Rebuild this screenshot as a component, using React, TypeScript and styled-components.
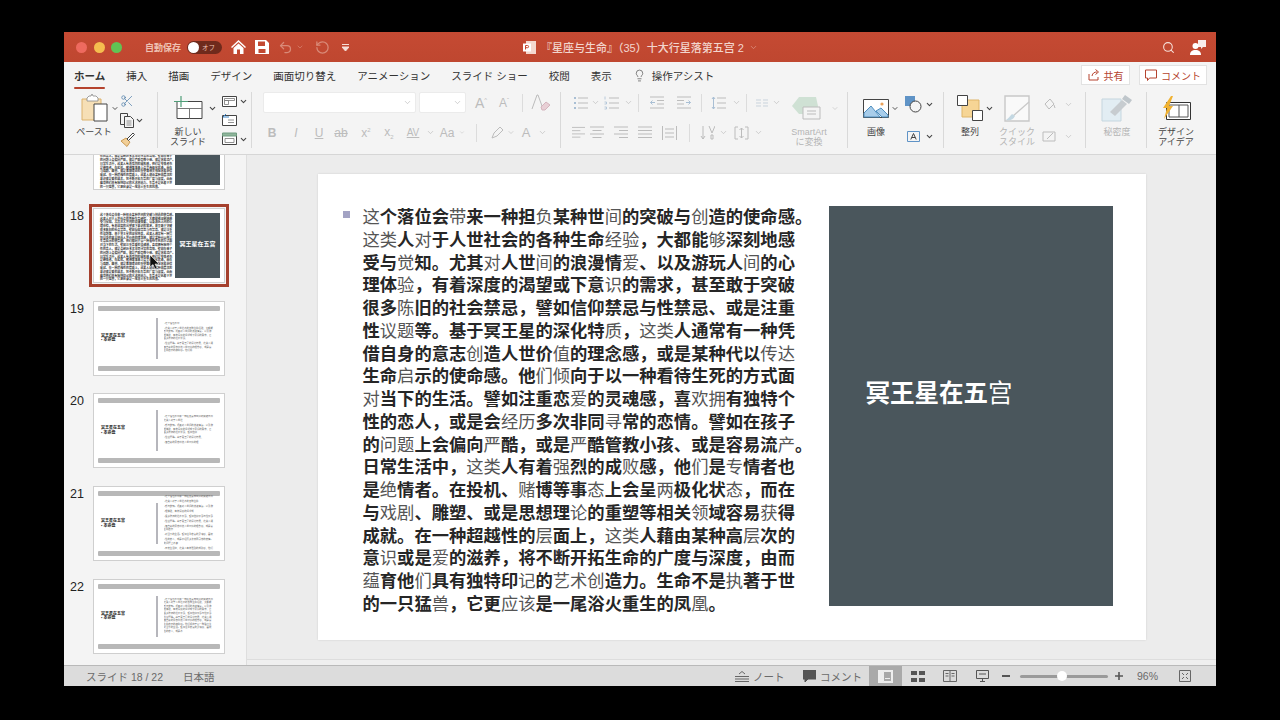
import React from "react";
import styled, { createGlobalStyle } from "styled-components";
import { Scissors, Lightbulb, Search, Undo2, RotateCcw, ChevronDown } from "lucide-react";

const PALE = "#bcbcbc";
const INK = "#4a4a4a";
const UI_FONT = `"Liberation Sans", "Noto Sans CJK JP", sans-serif`;
const CN_FONT = `"Liberation Sans", "Noto Sans CJK SC", sans-serif`;

const SLIDE_LINES = [
  "这个落位会带来一种担负某种世间的突破与创造的使命感。",
  "这类人对于人世社会的各种生命经验，大都能够深刻地感",
  "受与觉知。尤其对人世间的浪漫情爱、以及游玩人间的心",
  "理体验，有着深度的渴望或下意识的需求，甚至敢于突破",
  "很多陈旧的社会禁忌，譬如信仰禁忌与性禁忌、或是注重",
  "性议题等。基于冥王星的深化特质，这类人通常有一种凭",
  "借自身的意志创造人世价值的理念感，或是某种代以传达",
  "生命启示的使命感。他们倾向于以一种看待生死的方式面",
  "对当下的生活。譬如注重恋爱的灵魂感，喜欢拥有独特个",
  "性的恋人，或是会经历多次非同寻常的恋情。譬如在孩子",
  "的问题上会偏向严酷，或是严酷管教小孩、或是容易流产。",
  "日常生活中，这类人有着强烈的成败感，他们是专情者也",
  "是绝情者。在投机、赌博等事态上会呈两极化状态，而在",
  "与戏剧、雕塑、或是思想理论的重塑等相关领域容易获得",
  "成就。在一种超越性的层面上，这类人藉由某种高层次的",
  "意识或是爱的滋养，将不断开拓生命的广度与深度，由而",
  "蕴育他们具有独特印记的艺术创造力。生命不是执著于世",
  "的一只猛兽，它更应该是一尾浴火重生的凤凰。",
];

// these characters fell back to a thinner face in the original deck
const THIN_CHARS = "这带负间创类对经验够觉爱识陈议题质值传达启们倾欢拥历寻问严产强败专绝赌态两戏剧论领获层艺术记执兽应该风凰蕴宫";

const GlobalStyle = createGlobalStyle`
  html, body { margin: 0; background: #000; }
  body { font-family: ${UI_FONT}; }
`;

const Screen = styled.div`
  width: 1280px;
  height: 720px;
  padding-top: 32px;
  box-sizing: border-box;
  display: flex;
  justify-content: center;
  overflow: hidden;
  background: #000;
`;

const Window = styled.div`
  width: 1152px;
  height: 654px;
  display: flex;
  flex-direction: column;
  background: #ececec;
  overflow: hidden;
`;

const TitleBar = styled.div`
  height: 30px;
  flex: none;
  display: flex;
  align-items: center;
  background: linear-gradient(#c54a33, #bf4730);
  color: #f2d6ce;
  position: relative;
`;

const Light = styled.span<{ $c: string }>`
  width: 11px;
  height: 11px;
  border-radius: 50%;
  background: ${({ $c }) => $c};
  margin-right: 6.5px;
`;

const Lights = styled.div`
  display: flex;
  margin-left: 12px;
  width: 69px;
`;

const AutoSave = styled.span`
  font-size: 9px;
  font-weight: 700;
  width: 42px;
  color: #eec2b4;
`;

const Toggle = styled.div`
  width: 35px;
  height: 13px;
  border-radius: 7px;
  background: #6f2a1c;
  display: flex;
  align-items: center;
  color: #eec2b4;
  font-size: 6.5px;
  margin-right: 8px;
  &::before {
    content: "";
    width: 11px;
    height: 11px;
    border-radius: 50%;
    background: #fff;
    margin: 0 3px 0 1px;
  }
`;

const Slot = styled.div<{ $w: number }>`
  width: ${({ $w }) => $w}px;
  flex: none;
  display: flex;
  align-items: center;
  justify-content: center;
`;

const DocTitle = styled.div`
  position: absolute;
  left: 459px;
  top: 0;
  height: 30px;
  display: flex;
  align-items: center;
  gap: 5px;
  font-size: 11px;
  font-family: ${CN_FONT};
  font-weight: 500;
  white-space: nowrap;
`;

const TitleRight = styled.div`
  margin-left: auto;
  display: flex;
  align-items: center;
  gap: 15px;
  padding-right: 10px;
`;

const TabBar = styled.div`
  height: 26px;
  flex: none;
  display: flex;
  align-items: center;
  padding: 0 9px 0 10px;
  background: #f4f4f4;
`;

const Tab = styled.div<{ $active?: boolean }>`
  position: relative;
  font-size: 10.5px;
  color: #333;
  margin-right: 21px;
  white-space: nowrap;
  font-weight: ${({ $active }) => ($active ? 700 : 400)};
  &::after {
    content: "";
    display: ${({ $active }) => ($active ? "block" : "none")};
    position: absolute;
    left: 0;
    right: 0;
    bottom: -6px;
    height: 2px;
    border-radius: 1px;
    background: #b5432e;
  }
`;

const Assist = styled.div`
  display: flex;
  align-items: center;
  gap: 6px;
  font-size: 10.5px;
  color: #333;
`;

const TabActions = styled.div`
  margin-left: auto;
  display: flex;
  gap: 9px;
`;

const ActionButton = styled.div<{ $w: number }>`
  width: ${({ $w }) => $w}px;
  height: 20px;
  box-sizing: border-box;
  background: #fff;
  border: 1px solid #e2e2e2;
  color: #b5432e;
  font-size: 10px;
  display: flex;
  align-items: center;
  justify-content: center;
  gap: 4px;
`;

const Ribbon = styled.div`
  height: 67px;
  flex: none;
  display: flex;
  box-sizing: border-box;
  padding-top: 4px;
  background: #f4f4f4;
  border-bottom: 1px solid #d6d6d6;
`;

const Group = styled.div<{ $w: number; $pl?: number; $last?: boolean }>`
  width: ${({ $w }) => $w}px;
  height: 56px;
  margin-bottom: 6px;
  box-sizing: border-box;
  flex: none;
  display: flex;
  padding-left: ${({ $pl }) => $pl ?? 0}px;
  border-right: 1px solid ${({ $last }) => ($last ? "transparent" : "#d9d9d9")};
`;

const Stack = styled.div<{ $w: number }>`
  width: ${({ $w }) => $w}px;
  flex: none;
  display: flex;
  flex-direction: column;
  align-items: center;
`;

const BigIcon = styled.div`
  height: 32px;
  display: flex;
  align-items: center;
  justify-content: center;
`;

const ToolLabel = styled.div<{ $pale?: boolean }>`
  font-size: 9px;
  line-height: 10px;
  margin-top: 3px;
  text-align: center;
  white-space: pre;
  color: ${({ $pale }) => ($pale ? "#b4b4b4" : "#444")};
`;

const SmallColumn = styled.div`
  display: flex;
  flex-direction: column;
  justify-content: space-between;
  height: 56px;
`;

const SmallRow = styled.div`
  display: flex;
  align-items: center;
  height: 18px;
`;

const FontRows = styled.div`
  display: flex;
  flex-direction: column;
  gap: 9px;
`;

const ToolRow = styled.div`
  display: flex;
  align-items: center;
  height: 21px;
`;

const Field = styled.div<{ $w: number }>`
  width: ${({ $w }) => $w}px;
  height: 21px;
  flex: none;
  margin-right: 3px;
  box-sizing: border-box;
  background: #fff;
  border-radius: 2px;
  border: 1px solid #ebebeb;
  display: flex;
  align-items: center;
  justify-content: flex-end;
  padding-right: 3px;
`;

const Glyph = styled.span<{ $size?: number; $w?: number; $italic?: boolean; $bold?: boolean; $under?: boolean; $strike?: boolean }>`
  width: ${({ $w }) => ($w ? `${$w}px` : "auto")};
  flex: none;
  text-align: center;
  color: ${PALE};
  font-size: ${({ $size }) => $size ?? 12}px;
  font-style: ${({ $italic }) => ($italic ? "italic" : "normal")};
  font-weight: ${({ $bold }) => ($bold ? 700 : 400)};
  text-decoration: ${({ $under, $strike }) => ($under ? "underline" : $strike ? "line-through" : "none")};
  sup, sub { font-size: 6px; }
`;

const Rule = styled.div<{ $h?: number }>`
  width: 1px;
  height: ${({ $h }) => $h ?? 18}px;
  background: #dcdcdc;
`;

const Workspace = styled.div`
  flex: 1;
  min-height: 0;
  display: flex;
`;

const SlidePanel = styled.div`
  width: 183px;
  flex: none;
  overflow: hidden;
  box-sizing: border-box;
  background: #f4f4f4;
  border-right: 1px solid #dedede;
`;

const ThumbList = styled.div`
  margin-top: -40px;
  padding-left: 6px;
  display: flex;
  flex-direction: column;
  gap: 17.75px;
`;

const ThumbRow = styled.div`
  display: flex;
  height: 75px;
`;

const ThumbNumber = styled.div`
  width: 23px;
  font-size: 12.5px;
  line-height: 16px;
  color: #222;
`;

const Thumb = styled.div<{ $selected?: boolean }>`
  position: relative;
  width: 132px;
  height: 75px;
  box-sizing: border-box;
  background: #fff;
  border: 1px solid #cfcfcf;
  outline: ${({ $selected }) => ($selected ? "3px solid #a5402d" : "none")};
  outline-offset: 1px;
  overflow: hidden;
  font-family: ${CN_FONT};
`;

const ThumbBody = styled.div`
  height: 100%;
  box-sizing: border-box;
  padding: 4px 4px 4px 6px;
  display: flex;
  justify-content: space-between;
`;

const TinyText = styled.div`
  font-size: 2.9px;
  line-height: 3.8px;
  padding-top: 1px;
  font-weight: 700;
  color: #333;
  white-space: nowrap;
`;

const TinyPlate = styled.div`
  width: 46px;
  height: 65px;
  background: #4a565c;
  color: #fff;
  font-size: 6px;
  font-weight: 700;
  display: flex;
  align-items: center;
  justify-content: center;
  padding-bottom: 4px;
  box-sizing: border-box;
`;

const Cursor = styled.svg`
  position: absolute;
  left: 56px;
  top: 46px;
`;

const OutlineBody = styled.div`
  height: 100%;
  box-sizing: border-box;
  padding: 4px 4px;
  display: flex;
  flex-direction: column;
  justify-content: space-between;
`;

const GreyBar = styled.div`
  height: 5px;
  background: #b8b8b8;
  border-radius: 1px;
`;

const OutlineMiddle = styled.div`
  display: flex;
  align-items: center;
  height: 41px;
`;

const OutlineTitle = styled.div`
  width: 58px;
  padding-left: 3px;
  box-sizing: border-box;
  font-size: 4px;
  line-height: 4.4px;
  font-weight: 700;
  color: #222;
`;

const OutlineRule = styled.div`
  width: 1.5px;
  height: 41px;
  background: #b6b6bc;
`;

const OutlineText = styled.div`
  margin-left: 6px;
  width: 52px;
  overflow: hidden;
  font-size: 2.4px;
  line-height: 3.6px;
  color: #666;
  white-space: nowrap;
  p { margin: 0 0 1.4px; }
`;

const Stage = styled.div`
  flex: 1;
  display: flex;
  flex-direction: column;
`;

const SlideArea = styled.div`
  flex: 1;
  display: flex;
  align-items: center;
  justify-content: center;
`;

const StageFoot = styled.div`
  height: 5px;
  border-top: 1px solid #dddddd;
  background: #efefef;
`;

const Slide = styled.div`
  width: 828px;
  height: 466px;
  box-sizing: border-box;
  padding: 32px 33px 34px 25px;
  background: #fff;
  box-shadow: 0 0 2px rgba(0, 0, 0, 0.12);
  display: flex;
  font-family: ${CN_FONT};
`;

const Bullet = styled.div`
  width: 7px;
  height: 7px;
  margin-top: 5px;
  margin-right: 13px;
  flex: none;
  background: #a3a3c4;
`;

const SlideText = styled.div`
  flex: 1;
  font-size: 17.3px;
  line-height: 22.76px;
  font-weight: 700;
  color: #262626;
  white-space: nowrap;
`;

const TextLine = styled.div``;

const Thin = styled.span`
  font-weight: 400;
  color: #555;
`;

const Plate = styled.div`
  width: 284px;
  height: 400px;
  flex: none;
  box-sizing: border-box;
  padding: 0 0 30px 37px;
  display: flex;
  align-items: center;
  background: #4a565c;
  color: #fff;
  font-size: 24.5px;
  font-weight: 700;
`;

const StatusBar = styled.div`
  height: 20px;
  flex: none;
  display: flex;
  align-items: center;
  background: #dcdcdc;
  border-top: 1px solid #b9b9b9;
  color: #6a6a6a;
  font-size: 10.5px;
  padding-left: 22px;
`;

const StatusRight = styled.div`
  margin-left: auto;
  height: 100%;
  padding-right: 24px;
  display: flex;
  align-items: center;
`;

const StatusText = styled.span<{ $w: number }>`
  width: ${({ $w }) => $w}px;
  flex: none;
  white-space: nowrap;
`;

const ViewButton = styled(Slot)<{ $active?: boolean }>`
  height: 100%;
  background: ${({ $active }) => ($active ? "#a9a9a9" : "transparent")};
`;

const ZoomTrack = styled.div`
  width: 88px;
  height: 3px;
  margin: 0 4px 0 7px;
  border-radius: 2px;
  background: #9a9a9a;
  position: relative;
`;

const ZoomThumb = styled.div`
  position: absolute;
  left: 37px;
  top: -4px;
  width: 10px;
  height: 10px;
  border-radius: 50%;
  background: #fff;
`;

const Line = ({ w, h, d, c = INK, sw = 1, fill = "none" }: { w: number; h: number; d: string; c?: string; sw?: number; fill?: string }) => (
  <svg width={w} height={h} viewBox={`0 0 ${w} ${h}`} fill={fill} stroke={c} strokeWidth={sw}>
    <path d={d} />
  </svg>
);

const Chev = ({ pale }: { pale?: boolean }) => (
  <ChevronDown size={9} strokeWidth={pale ? 1.8 : 2.8} color={pale ? PALE : "#444"} />
);

const PasteIcon = () => (
  <svg width="27" height="29" viewBox="0 0 27 29" fill="none">
    <path d="M1 5h19v21H1z" fill="#f6dfb6" stroke="#dcb26d" />
    <path d="M6 4l2-2h2l1-2 1 2h3l2 2v3H6z" fill="#fff" stroke="#888" strokeWidth=".8" />
    <path d="M13 10h13v17H13z" fill="#fff" stroke="#444" />
  </svg>
);

const CopyIcon = () => (
  <svg width="15" height="16" viewBox="0 0 15 16" fill="none" stroke="#444">
    <path d="M.5 1.5h7v11h-7z" />
    <path d="M4.5 4.5h6l3 3v8h-9z" fill="#f4f4f4" />
    <path d="M6.5 9h5M6.5 11h5M6.5 13h5" stroke="#777" strokeWidth=".8" />
  </svg>
);

const BrushIcon = () => (
  <svg width="15" height="15" viewBox="0 0 15 15" fill="none">
    <path d="M1 9l5-3 4 4-3 4.5z" fill="#f2cf97" stroke="#c99a55" />
    <path d="M7 7l6-6 1.5 1.5-6 6z" fill="#fff" stroke="#444" />
  </svg>
);

const NewSlideIcon = () => (
  <svg width="29" height="24" viewBox="0 0 29 24" fill="none">
    <path d="M3 5.5h25v17H3z" fill="#fff" stroke="#444" />
    <path d="M3 12.5h25M15.5 12.5v10" stroke="#777" />
    <path d="M7 0v11M0 5.5h14" stroke="#4f9d78" strokeWidth="1.2" />
  </svg>
);

const LayoutIcon = ({ variant }: { variant: number }) => (
  <svg width="15" height="15" viewBox="0 0 15 15" fill="none" stroke="#444">
    <path d="M.5 2.5h14v10H.5z" fill="#fff" />
    {variant === 0 && <path d="M2.5 4.5h10v2h-10zM2.5 6.5h4v4h-4z" stroke="#777" strokeWidth=".8" />}
    {variant === 1 && <path d="M6 7h6M6 9.5h6" stroke="#777" strokeWidth=".8" />}
    {variant === 1 && <path d="M1 4l3-3M1 4h6" stroke="#3a84c5" />}
    {variant === 2 && <path d="M.5 1h14v3H.5z" fill="#8fb59b" stroke="#6f9c80" />}
    {variant === 2 && <path d="M3 6.5h9v4H3z" stroke="#777" strokeWidth=".8" />}
  </svg>
);

const EraserIcon = () => (
  <svg width="20" height="17" viewBox="0 0 20 17" fill="none" stroke={PALE}>
    <path d="M1 15L6 1h1l4 11" />
    <path d="M10 13l5-5 4 3-5 5h-3z" fill="#e8cfd5" stroke="#d4b4bd" />
  </svg>
);

const PenIcon = () => (
  <svg width="15" height="14" viewBox="0 0 15 14" fill="none" stroke={PALE}>
    <path d="M2 12l2-5 6-6 3 3-6 6z" />
  </svg>
);

const BulletsIcon = () => (
  <svg width="15" height="14" viewBox="0 0 15 14" fill="none" stroke={PALE}>
    <path d="M5 2h10M5 7h10M5 12h10" />
    <path d="M1 1h2v2H1zM1 6h2v2H1zM1 11h2v2H1z" fill="#a9bfd4" stroke="none" />
  </svg>
);

const NumbersIcon = () => (
  <svg width="15" height="14" viewBox="0 0 15 14" fill="none" stroke={PALE}>
    <path d="M5 2h10M5 7h10M5 12h10" />
    <path d="M1 .5v3M.5 6h2v2h-2M.5 11h2v2h-2" stroke="#a9bfd4" strokeWidth=".8" />
  </svg>
);

const IndentIcon = ({ flip }: { flip?: boolean }) => (
  <svg width="14" height="13" viewBox="0 0 14 13" fill="none" stroke={PALE} style={flip ? { transform: "scaleX(-1)" } : undefined}>
    <path d="M0 1h14M7 4.5h7M7 8h7M0 12h14" />
    <path d="M5 6.5H.5M2.5 4.5l-2 2 2 2" stroke="#a9bfd4" />
  </svg>
);

const SpacingIcon = () => (
  <svg width="15" height="14" viewBox="0 0 15 14" fill="none" stroke={PALE}>
    <path d="M6 2h9M6 7h9M6 12h9" />
    <path d="M2.5 1v12M1 3l1.5-2L4 3M1 11l1.5 2L4 11" stroke="#a9bfd4" />
  </svg>
);

const ColumnsIcon = () => <Line w={12} h={8} d="M0 1h5M7 1h5M0 4h5M7 4h5M0 7h5M7 7h5" c="#c9d3dc" />;

const SmartArtIcon = () => (
  <svg width="34" height="24" viewBox="0 0 34 24" fill="none">
    <path d="M0 10L7 1h17l2 9-2 8H7z" fill="#cfe1d4" />
    <path d="M11 11h17v12H11z" fill="#f4f4f4" stroke={PALE} />
    <path d="M15 15h9M15 18h9" stroke={PALE} />
  </svg>
);

const AlignIcon = ({ mode }: { mode: "l" | "c" | "r" | "j" }) => {
  const d = {
    l: "M0 1h14M0 4.5h9M0 8h14M0 11.5h9",
    c: "M0 1h14M2.5 4.5h9M0 8h14M2.5 11.5h9",
    r: "M0 1h14M5 4.5h9M0 8h14M5 11.5h9",
    j: "M0 1h14M0 4.5h14M0 8h14M0 11.5h14",
  }[mode];
  return <Line w={14} h={13} d={d} c={PALE} />;
};

const DistributeIcon = () => <Line w={15} h={14} d="M.5 0v14M14.5 0v14M3 3h9M3 7h9M3 11h9" c={PALE} />;
const TextDirIcon = () => <Line w={15} h={15} d="M3 1v13M1 11l2 3 2-3M9 1l3 7M15 1l-3 7M11 10h2v4h-2z" c={PALE} />;
const TextAlignIcon = () => <Line w={15} h={14} d="M1 1h3M1 13h3M1 1v12M11 1h3v12h-3M7.5 2v10M5.5 4l2-2 2 2M5.5 10l2 2 2-2" c={PALE} />;

const PictureIcon = () => (
  <svg width="26" height="19" viewBox="0 0 26 19" fill="none">
    <path d="M.5.5h25v18H.5z" fill="#fff" stroke="#444" />
    <path d="M1 14l7-7 9 11H1zM13 12l5-3 7 7v2h-6z" fill="#a8cdea" stroke="#4f8fc0" />
    <circle cx="19" cy="5" r="1.6" fill="#eba25b" />
  </svg>
);

const ShapesIcon = () => (
  <svg width="17" height="17" viewBox="0 0 17 17" fill="none">
    <path d="M0 0h10v10H0z" fill="#5f93c6" />
    <circle cx="10.5" cy="10.5" r="5.5" fill="#f4f4f4" stroke="#444" />
  </svg>
);

const TextBoxIcon = () => (
  <svg width="15" height="13" viewBox="0 0 15 13" fill="none">
    <path d="M1.5 1.5h12v10h-12z" stroke="#5f93c6" />
    <path d="M4.8 9.5l2.7-6 2.7 6M5.8 7.5h3.4" stroke="#444" />
  </svg>
);

const ArrangeIcon = () => (
  <svg width="26" height="26" viewBox="0 0 26 26" fill="none">
    <path d="M5 5h17v17H5z" fill="#f6d595" stroke="#dfb568" />
    <path d="M.5.5h10v10H.5z" fill="#fff" stroke="#444" />
    <path d="M15.5 15.5h10v10h-10z" fill="#fff" stroke="#444" />
  </svg>
);

const QuickStyleIcon = () => (
  <svg width="26" height="27" viewBox="0 0 26 27" fill="none">
    <path d="M1 1h24v25H1z" fill="#f9f9f9" stroke="#c8c8c8" strokeWidth="1.4" />
    <path d="M9 21L25 7" stroke="#c8c8c8" strokeWidth="1.2" />
    <path d="M8 19c-2 2-3 4-6 6 4 1 7 0 9-4z" fill="#c4d8e2" />
  </svg>
);

const SensitivityIcon = () => (
  <svg width="32" height="27" viewBox="0 0 32 27" fill="none">
    <path d="M1 4h19v22H1z" fill="#e2edf3" stroke="#c5d6df" />
    <path d="M9 17L21 5l5 4-12 12z" fill="#c7ccd0" />
    <path d="M24 0l7 5-3 4-7-5z" fill="#bfc6cb" />
  </svg>
);

const DesignIcon = () => (
  <svg width="29" height="25" viewBox="0 0 29 25" fill="none">
    <path d="M4.5 6.5h24v17h-24z" fill="#fff" stroke="#333" />
    <path d="M7 9h19v12H7zM17 9v12" stroke="#555" />
    <path d="M9 0L1 12h4L2 23l9-13H7l4-10z" fill="#f0b232" />
  </svg>
);

const HomeIcon = () => (
  <svg width="15" height="14" viewBox="0 0 15 14" fill="#fff">
    <path d="M7.5 0L15 7l-1 1-6.5-6L1 8 0 7z" />
    <path d="M2.5 8l5-4.5 5 4.5v6H9V9.5H6V14H2.5z" />
  </svg>
);

const SaveIcon = () => (
  <svg width="14" height="14" viewBox="0 0 14 14" fill="#fff">
    <path fillRule="evenodd" d="M0 0h11l3 3v11H0zM3 1.5V6h7V1.5zM3.5 9v4h7V9z" />
  </svg>
);

const PersonIcon = () => (
  <svg width="16" height="16" viewBox="0 0 16 16" fill="#fff">
    <path d="M8 1h8v7h-3l-2 2V8H8z" opacity=".9" />
    <circle cx="5.5" cy="7" r="3" />
    <path d="M0 16c0-3.5 2-5 5.5-5s5.500 1.500 5.500 5z" />
  </svg>
);

const DocIcon = () => (
  <svg width="13" height="13" viewBox="0 0 13 13">
    <path d="M3 0h10v13H3z" fill="#f4d8cf" />
    <path d="M0 2.500h8v8H0z" fill="#fff" />
    <path d="M2.500 8.500v-4h2a1 1 0 010 2.200h-2" fill="none" stroke="#c5492f" />
  </svg>
);

const ShareIcon = () => <Line w={12} h={12} d="M1 5v6h9V8M4 7c.5-3 2.500-4 5-4M7.500.5L10.500 3 7.500 5.500" c="#b5432e" />;
const CommentIcon = () => <Line w={12} h={12} d="M.5 1h11v8h-7l-2 2.500V9h-2z" c="#b5432e" />;

const CursorArrow = () => (
  <Cursor width="9" height="15" viewBox="0 0 9 15">
    <path d="M0 0v12l3-2.500 2 4.500 2-1-2-4h4z" fill="#111" stroke="#fff" strokeWidth=".5" />
  </Cursor>
);

const ColoredLine = ({ text }: { text: string }) => (
  <TextLine>
    {text.split("").map((ch, i) => (THIN_CHARS.includes(ch) ? <Thin key={i}>{ch}</Thin> : ch))}
  </TextLine>
);

const OutlineThumb = ({ paragraphs }: { paragraphs: string[][] }) => (
  <Thumb>
    <OutlineBody>
      <GreyBar />
      <OutlineMiddle>
        <OutlineTitle>
          冥王星在五宫
          <br />
          • 本命盘
        </OutlineTitle>
        <OutlineRule />
        <OutlineText>
          {paragraphs.map((lines, i) => (
            <p key={i}>
              {lines.map((l, j) => (
                <React.Fragment key={j}>
                  {j === 0 ? "• " : "  "}
                  {l}
                  <br />
                </React.Fragment>
              ))}
            </p>
          ))}
        </OutlineText>
      </OutlineMiddle>
      <GreyBar />
    </OutlineBody>
  </Thumb>
);

const pick = (line: number, count = 20) => SLIDE_LINES[line].slice(0, count);

const OUTLINES: { n: number; paragraphs: string[][] }[] = [
  { n: 19, paragraphs: [[pick(0, 6)], [pick(1), pick(2), pick(3), pick(4, 10)], [pick(5), pick(6), pick(7, 12)]] },
  { n: 20, paragraphs: [[pick(0), pick(1, 8)], [pick(2), pick(3), pick(4, 14)], [pick(5, 16)], [pick(6, 14)]] },
  {
    n: 21,
    paragraphs: [[pick(0)], [pick(1, 14)], [pick(2)], [pick(3, 12)], [pick(4)], [pick(5)], [pick(6), pick(7, 4)], [pick(8)], [pick(9), pick(10, 6)], [pick(11)]],
  },
  { n: 22, paragraphs: [[pick(0), pick(1), pick(2), pick(3), pick(4), pick(5), pick(6), pick(7), pick(8), pick(9, 8)]] },
];

export default function App() {
  return (
    <Screen>
      <GlobalStyle />
      <Window>
        <TitleBar>
          <Lights>
            <Light $c="#ee6a5f" />
            <Light $c="#f5bd4f" />
            <Light $c="#61c454" />
          </Lights>
          <AutoSave>自動保存</AutoSave>
          <Toggle>オフ</Toggle>
          <Slot $w={17}><HomeIcon /></Slot>
          <Slot $w={29}><SaveIcon /></Slot>
          <Slot $w={18}><Undo2 size={15} color="#d98a78" /></Slot>
          <Slot $w={12}><ChevronDown size={8} color="#d98a78" /></Slot>
          <Slot $w={32}><RotateCcw size={15} color="#d98a78" /></Slot>
          <Slot $w={14}><Line w={7} h={7} d="M0 .5h7M0 3h7l-3.500 4z" c="#f6dfd8" fill="#f6dfd8" /></Slot>
          <DocTitle>
            <DocIcon />
            <span>『星座与生命』（35）十大行星落第五宫 2</span>
            <ChevronDown size={9} color="#dd9685" />
          </DocTitle>
          <TitleRight>
            <Search size={13} color="#f6dfd8" />
            <PersonIcon />
          </TitleRight>
        </TitleBar>

        <TabBar>
          <Tab $active>ホーム</Tab>
          <Tab>挿入</Tab>
          <Tab>描画</Tab>
          <Tab>デザイン</Tab>
          <Tab>画面切り替え</Tab>
          <Tab>アニメーション</Tab>
          <Tab>スライド ショー</Tab>
          <Tab>校閲</Tab>
          <Tab>表示</Tab>
          <Assist>
            <Lightbulb size={13} strokeWidth={1.2} color="#444" />
            操作アシスト
          </Assist>
          <TabActions>
            <ActionButton $w={49}><ShareIcon />共有</ActionButton>
            <ActionButton $w={68}><CommentIcon />コメント</ActionButton>
          </TabActions>
        </TabBar>

        <Ribbon>
          <Group $w={94} $pl={13}>
            <Stack $w={34}>
              <BigIcon><PasteIcon /></BigIcon>
              <ToolLabel>ペースト</ToolLabel>
            </Stack>
            <Slot $w={8} style={{ height: 32 }}><Chev /></Slot>
            <SmallColumn>
              <SmallRow><Slot $w={16}><Scissors size={14} strokeWidth={1.1} color="#3a6f9f" /></Slot></SmallRow>
              <SmallRow><Slot $w={16}><CopyIcon /></Slot><Slot $w={9}><Chev /></Slot></SmallRow>
              <SmallRow><Slot $w={16}><BrushIcon /></Slot></SmallRow>
            </SmallColumn>
          </Group>

          <Group $w={94} $pl={10}>
            <Stack $w={40}>
              <BigIcon><NewSlideIcon /></BigIcon>
              <ToolLabel>{"新しい\nスライド"}</ToolLabel>
            </Stack>
            <Slot $w={9} style={{ height: 32 }}><Chev /></Slot>
            <SmallColumn style={{ marginLeft: 4 }}>
              <SmallRow><Slot $w={17}><LayoutIcon variant={0} /></Slot><Slot $w={10}><Chev /></Slot></SmallRow>
              <SmallRow><Slot $w={17}><LayoutIcon variant={1} /></Slot></SmallRow>
              <SmallRow><Slot $w={17}><LayoutIcon variant={2} /></Slot><Slot $w={10}><Chev /></Slot></SmallRow>
            </SmallColumn>
          </Group>

          <Group $w={309} $pl={11}>
            <FontRows>
              <ToolRow>
                <Field $w={153}><Chev pale /></Field>
                <Field $w={47}><Chev pale /></Field>
                <Glyph $w={24} $size={14}>A<sup>^</sup></Glyph>
                <Glyph $w={22} $size={12}>A<sup>ˇ</sup></Glyph>
                <Slot $w={14}><Rule /></Slot>
                <Slot $w={24}><EraserIcon /></Slot>
              </ToolRow>
              <ToolRow>
                <Glyph $w={18} $bold>B</Glyph>
                <Glyph $w={30} $italic>I</Glyph>
                <Glyph $w={16} $under>U</Glyph>
                <Glyph $w={28} $strike>ab</Glyph>
                <Glyph $w={22}>x<sup>2</sup></Glyph>
                <Glyph $w={24}>x<sub>2</sub></Glyph>
                <Glyph $w={24} $size={10} $under>AV</Glyph>
                <Slot $w={10}><Chev pale /></Slot>
                <Glyph $w={24}>Aa</Glyph>
                <Slot $w={6}><Chev pale /></Slot>
                <Slot $w={22}><Rule /></Slot>
                <Slot $w={20}><PenIcon /></Slot>
                <Slot $w={8}><Chev pale /></Slot>
                <Glyph $w={22} $size={13}>A</Glyph>
                <Slot $w={10}><Chev pale /></Slot>
              </ToolRow>
            </FontRows>
          </Group>

          <Group $w={287} $pl={11}>
            <FontRows>
              <ToolRow>
                <Slot $w={17}><BulletsIcon /></Slot>
                <Slot $w={12}><Chev pale /></Slot>
                <Slot $w={21}><NumbersIcon /></Slot>
                <Slot $w={12}><Chev pale /></Slot>
                <Slot $w={9}><Rule /></Slot>
                <Slot $w={28}><IndentIcon /></Slot>
                <Slot $w={26}><IndentIcon flip /></Slot>
                <Slot $w={9}><Rule /></Slot>
                <Slot $w={25}><SpacingIcon /></Slot>
                <Slot $w={10}><Chev pale /></Slot>
                <Slot $w={11}><Rule /></Slot>
                <Slot $w={19}><ColumnsIcon /></Slot>
                <Slot $w={11}><Chev pale /></Slot>
              </ToolRow>
              <ToolRow>
                <Slot $w={13}><AlignIcon mode="l" /></Slot>
                <Slot $w={24}><AlignIcon mode="c" /></Slot>
                <Slot $w={24}><AlignIcon mode="r" /></Slot>
                <Slot $w={24}><AlignIcon mode="j" /></Slot>
                <Slot $w={24}><DistributeIcon /></Slot>
                <Slot $w={16}><Rule /></Slot>
                <Slot $w={20}><TextDirIcon /></Slot>
                <Slot $w={12}><Chev pale /></Slot>
                <Slot $w={24}><TextAlignIcon /></Slot>
                <Slot $w={10}><Chev pale /></Slot>
              </ToolRow>
            </FontRows>
            <Stack $w={44} style={{ marginLeft: 5 }}>
              <BigIcon><SmartArtIcon /></BigIcon>
              <ToolLabel $pale>{"SmartArt\nに変換"}</ToolLabel>
            </Stack>
            <Slot $w={8} style={{ height: 32 }}><Chev pale /></Slot>
          </Group>

          <Group $w={96} $pl={13}>
            <Stack $w={30}>
              <BigIcon><PictureIcon /></BigIcon>
              <ToolLabel>画像</ToolLabel>
            </Stack>
            <Slot $w={8} style={{ height: 32 }}><Chev /></Slot>
            <SmallColumn style={{ marginLeft: 5, height: 50, paddingTop: 3 }}>
              <SmallRow><Slot $w={18}><ShapesIcon /></Slot><Slot $w={14}><Chev /></Slot></SmallRow>
              <SmallRow style={{ marginBottom: 0 }}><Slot $w={18}><TextBoxIcon /></Slot><Slot $w={14}><Chev /></Slot></SmallRow>
            </SmallColumn>
          </Group>

          <Group $w={142} $pl={12}>
            <Stack $w={28}>
              <BigIcon><ArrangeIcon /></BigIcon>
              <ToolLabel>整列</ToolLabel>
            </Stack>
            <Slot $w={10} style={{ height: 32 }}><Chev /></Slot>
            <Stack $w={40} style={{ marginLeft: 3 }}>
              <BigIcon><QuickStyleIcon /></BigIcon>
              <ToolLabel $pale>{"クイック\nスタイル"}</ToolLabel>
            </Stack>
            <SmallColumn style={{ marginLeft: 0, height: 50, paddingTop: 3 }}>
              <SmallRow><Slot $w={24}><Line w={13} h={12} d="M2 6l5-5 4 5-5 5zM11 7l1 3" c={PALE} /></Slot><Slot $w={14}><Chev pale /></Slot></SmallRow>
              <SmallRow><Slot $w={24}><Line w={14} h={11} d="M1 1h12v9H1zM5 8l6-6" c={PALE} /></Slot><Slot $w={14}><Chev pale /></Slot></SmallRow>
            </SmallColumn>
          </Group>

          <Group $w={61} $pl={13}>
            <Stack $w={36}>
              <BigIcon><SensitivityIcon /></BigIcon>
              <ToolLabel $pale>秘密度</ToolLabel>
            </Stack>
          </Group>

          <Group $w={69} $pl={8} $last>
            <Stack $w={42}>
              <BigIcon><DesignIcon /></BigIcon>
              <ToolLabel>{"デザイン\nアイデア"}</ToolLabel>
            </Stack>
          </Group>
        </Ribbon>

        <Workspace>
          <SlidePanel>
            <ThumbList>
              <ThumbRow>
                <ThumbNumber />
                <Thumb>
                  <ThumbBody>
                    <TinyText>{SLIDE_LINES.map((l, i) => <div key={i}>{l}</div>)}</TinyText>
                    <TinyPlate />
                  </ThumbBody>
                </Thumb>
              </ThumbRow>
              <ThumbRow>
                <ThumbNumber>18</ThumbNumber>
                <Thumb $selected>
                  <ThumbBody>
                    <TinyText>{SLIDE_LINES.map((l, i) => <div key={i}>{l}</div>)}</TinyText>
                    <TinyPlate>冥王星在五宫</TinyPlate>
                  </ThumbBody>
                  <CursorArrow />
                </Thumb>
              </ThumbRow>
              {OUTLINES.map((o) => (
                <ThumbRow key={o.n}>
                  <ThumbNumber>{o.n}</ThumbNumber>
                  <OutlineThumb paragraphs={o.paragraphs} />
                </ThumbRow>
              ))}
            </ThumbList>
          </SlidePanel>

          <Stage>
            <SlideArea>
              <Slide>
                <Bullet />
                <SlideText>
                  {SLIDE_LINES.map((l, i) => <ColoredLine key={i} text={l} />)}
                </SlideText>
                <Plate>冥王星在五<Thin style={{ color: "#fff" }}>宫</Thin></Plate>
              </Slide>
            </SlideArea>
            <StageFoot />
          </Stage>
        </Workspace>

        <StatusBar>
          <StatusText $w={97}>スライド 18 / 22</StatusText>
          <span>日本語</span>
          <StatusRight>
            <Slot $w={16}><Line w={14} h={11} d="M0 10.500h14M0 8h14M0 5.500h14M4 3l3-2.500L10 3" c="#666" /></Slot>
            <StatusText $w={48} style={{ paddingLeft: 3 }}>ノート</StatusText>
            <Slot $w={16}><Line w={13} h={12} d="M0 0h13v9H5l-3 3V9H0z" c="#555" fill="#555" /></Slot>
            <StatusText $w={49} style={{ paddingLeft: 3 }}>コメント</StatusText>
            <ViewButton $w={33} $active>
              <svg width="15" height="13" viewBox="0 0 15 13"><path d="M0 0h15v13H0z" fill="#eee" /><path d="M5.500 1.500h8v10h-8zM7 8.500h5" fill="#a9a9a9" stroke="#eee" /></svg>
            </ViewButton>
            <ViewButton $w={31}><Line w={14} h={11} d="M0 0h6v4H0zM8 0h6v4H8zM0 7h6v4H0zM8 7h6v4H8z" c="#555" fill="#555" sw={0} /></ViewButton>
            <ViewButton $w={33}><Line w={14} h={12} d="M.5.500h13v11H.5zM7 .5v11M2.500 3.500h3M2.500 6h3M8.500 3.500h3M8.500 6h3" c="#666" /></ViewButton>
            <ViewButton $w={33}><Line w={13} h={12} d="M.5.500h12v8H.5zM6.500 8.500v3M4 11.500h5M3 4h7" c="#555" /></ViewButton>
            <Slot $w={14}><Line w={8} h={2} d="M0 1h8" c="#555" sw={2} /></Slot>
            <ZoomTrack><ZoomThumb /></ZoomTrack>
            <Slot $w={14}><Line w={8} h={8} d="M0 4h8M4 0v8" c="#555" sw={1.6} /></Slot>
            <Slot $w={11} />
            <StatusText $w={24}>96%</StatusText>
            <Slot $w={17} />
            <Slot $w={14}><Line w={12} h={12} d="M.5.500h11v11H.5zM3 3l2 2M9 3L7 5M3 9l2-2M9 9L7 7" c="#666" /></Slot>
          </StatusRight>
        </StatusBar>
      </Window>
    </Screen>
  );
}
